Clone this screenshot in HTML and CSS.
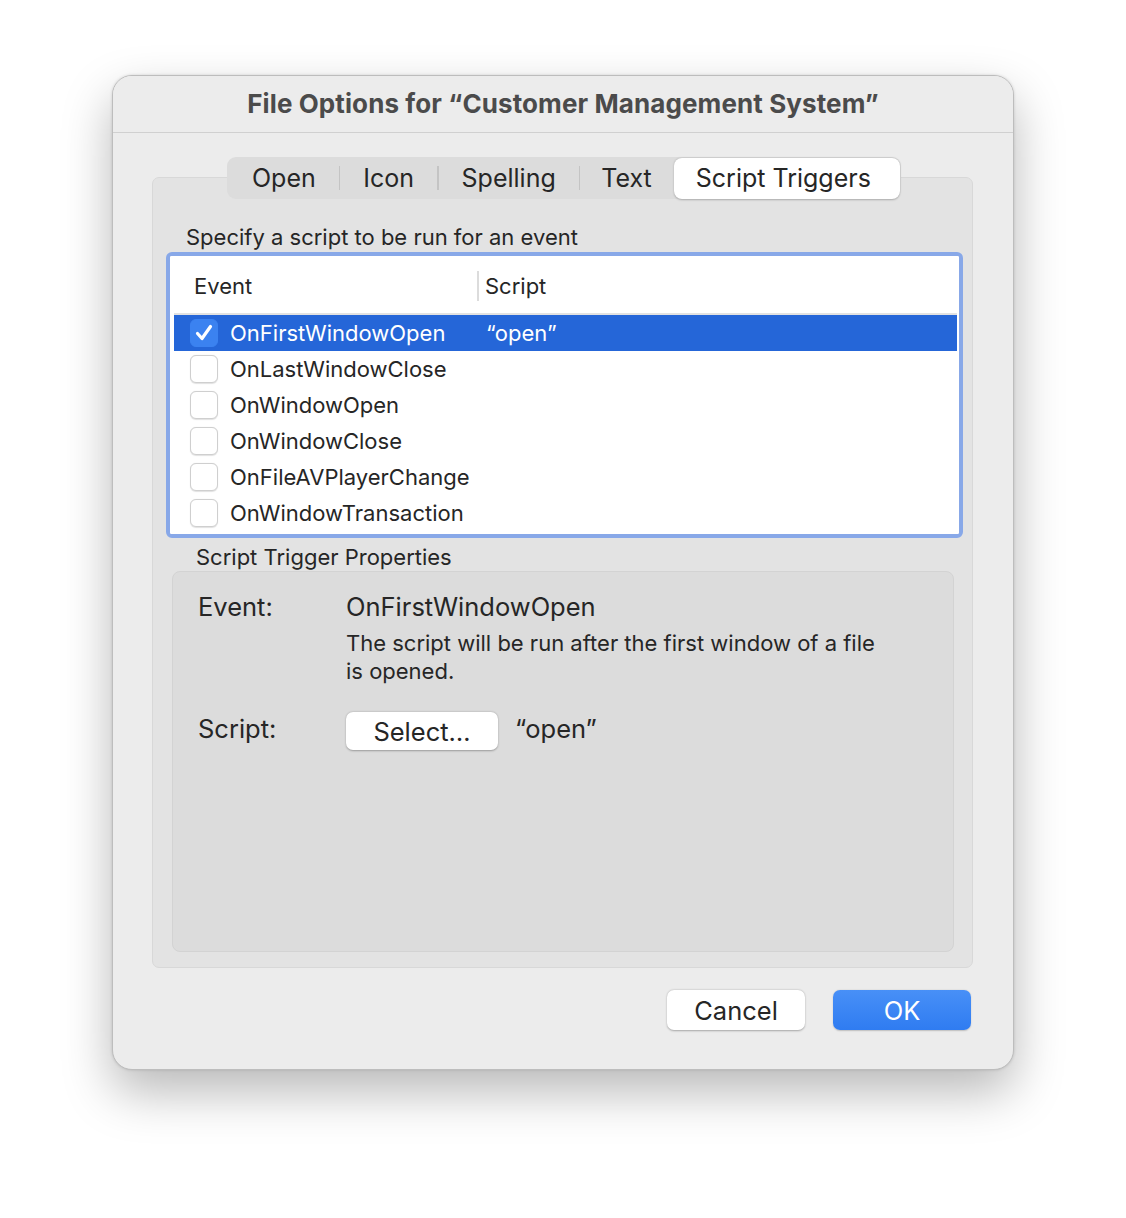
FILE: index.html
```html
<!DOCTYPE html>
<html>
<head>
<meta charset="utf-8">
<link rel="stylesheet" href="styles.css">
</head>
<body>
<div class="window">
  <div class="titlebar">File Options for “Customer Management System”</div>
  <div class="content">
    <div class="tabbox">
      <div class="segmented">
        <div class="seg">Open</div>
        <div class="sep"></div>
        <div class="seg">Icon</div>
        <div class="sep"></div>
        <div class="seg">Spelling</div>
        <div class="sep"></div>
        <div class="seg">Text</div>
        <div class="seg selected">Script Triggers</div>
      </div>
      <div class="tabbody">
        <div class="label specify">Specify a script to be run for an event</div>
        <div class="focusring">
          <div class="table">
            <div class="thead">
              <div class="th th-event">Event</div>
              <div class="th th-script">Script</div>
            </div>
            <div class="row sel">
              <span class="cb checked"><svg viewBox="0 0 28 28" width="28" height="28"><path d="M7.5 14.5 L12 19.5 L20.5 7.5" fill="none" stroke="#fff" stroke-width="3.2" stroke-linecap="round" stroke-linejoin="round"/></svg></span>
              <span class="ev">OnFirstWindowOpen</span>
              <span class="sc">“open”</span>
            </div>
            <div class="row"><span class="cb"></span><span class="ev">OnLastWindowClose</span></div>
            <div class="row"><span class="cb"></span><span class="ev">OnWindowOpen</span></div>
            <div class="row"><span class="cb"></span><span class="ev">OnWindowClose</span></div>
            <div class="row"><span class="cb"></span><span class="ev">OnFileAVPlayerChange</span></div>
            <div class="row"><span class="cb"></span><span class="ev">OnWindowTransaction</span></div>
          </div>
        </div>
        <div class="label props-title">Script Trigger Properties</div>
        <div class="props">
          <div class="prow">
            <div class="plabel">Event:</div>
            <div class="pval">
              <div class="evname">OnFirstWindowOpen</div>
              <div class="desc">The script will be run after the first window of a file is opened.</div>
            </div>
          </div>
          <div class="prow script-row">
            <div class="plabel">Script:</div>
            <div class="pval inline">
              <div class="btn select">Select…</div>
              <div class="scriptname">“open”</div>
            </div>
          </div>
        </div>
      </div>
    </div>
    <div class="actions">
      <div class="btn cancel">Cancel</div>
      <div class="btn ok">OK</div>
    </div>
  </div>
</div>
</body>
</html>
```
FILE: styles.css
```css
* { box-sizing: border-box; }
html, body { margin: 0; padding: 0; }
body {
  background: #ffffff;
  font-family: Inter, "Noto Sans", "Liberation Sans", sans-serif;
  color: #262626;
  padding: 75px 0 0 112px;
  height: 1218px;
  overflow: hidden;
}
.window {
  width: 902px;
  height: 995px;
  background: #ececec;
  border-radius: 20px;
  border: 1px solid #bdbdbd;
  box-shadow: 0 22px 50px rgba(0,0,0,0.28), 0 0 3px rgba(0,0,0,0.15);
  display: flex;
  flex-direction: column;
  overflow: hidden;
}
.titlebar {
  height: 57px;
  border-bottom: 1px solid #d0d0d0;
  display: flex;
  align-items: center;
  justify-content: center;
  font-weight: 700;
  font-size: 26px;
  letter-spacing: 0.1px;
  color: #4b4b4b;
  background: #ececec;
  padding-bottom: 2px;
}
.content {
  padding: 24px 40px 0 39px;
  display: flex;
  flex-direction: column;
}
.tabbox {
  position: relative;
  padding-top: 20px;
}
.segmented {
  position: absolute;
  top: 0;
  left: 75px;
  height: 42px;
  width: 674px;
  background: #dcdcdc;
  border-radius: 9px;
  display: flex;
  align-items: center;
  padding: 0 1px;
  z-index: 2;
}
.seg {
  font-size: 25px;
  color: #262626;
  padding: 0 23px;
  height: 40px;
  display: flex;
  align-items: center;
  white-space: nowrap;
}
.seg:first-child { padding-left: 24px; }
.seg:nth-child(7) { padding: 0 22px 0 21px; }
.sep { width: 1.5px; height: 24px; background: #c4c4c4; }
.seg.selected {
  background: #ffffff;
  border-radius: 8px;
  box-shadow: 0 0.5px 2px rgba(0,0,0,0.25);
  width: 227px;
  padding: 0 0 0 22px;
  height: 41px;
  margin-left: auto;
}
.tabbody {
  background: #e3e3e3;
  border: 1px solid #d8d8d8;
  border-radius: 7px;
  height: 791px;
  padding: 46px 9px 0 13px;
}
.label {
  font-size: 22px;
  color: #262626;
}
.specify { padding-left: 20px; height: 27px; line-height: 27px; }
.focusring {
  margin-top: 1px;
  border: 4px solid #88a8e8;
  border-radius: 6px;
  background: #88a8e8;
  width: 797px;
  height: 286px;
  overflow: hidden;
}
.table {
  background: #ffffff;
  height: 100%;
  border-style: solid;
  border-color: #ffffff;
  border-width: 3px 2px 2px 4px;
}
.thead {
  height: 56px;
  display: flex;
  align-items: center;
  border-bottom: 2px solid #e2e2e2;
}
.th { font-size: 22px; color: #262626; }
.th-event {
  width: 305px;
  padding-left: 20px;
  height: 30px;
  line-height: 30px;
  border-right: 2px solid #dcdcdc;
}
.th-script { padding-left: 6px; }
.row {
  height: 36px;
  display: flex;
  align-items: center;
  padding-left: 16px;
  font-size: 22px;
  color: #262626;
}
.row.sel { background: #2566d8; color: #ffffff; }
.cb {
  width: 28px;
  height: 28px;
  border-radius: 6px;
  background: #ffffff;
  border: 1px solid #cfcfcf;
  box-shadow: 0 0.5px 1px rgba(0,0,0,0.12);
  display: inline-block;
  flex: none;
}
.cb.checked {
  background: #3b82f0;
  border-color: #3b82f0;
  box-shadow: none;
}
.cb svg { display: block; margin: -1px; }
.ev { margin-left: 12px; width: 256px; }
.props-title { padding-left: 30px; margin-top: 5px; height: 28px; line-height: 28px; }
.props {
  margin-left: 6px;
  width: 782px;
  height: 381px;
  background: #dcdcdc;
  border: 1px solid #d3d3d3;
  border-radius: 8px;
  padding: 19px 0 0 25px;
}
.prow { display: flex; }
.plabel { width: 148px; font-size: 25.5px; color: #262626; line-height: 32px; }
.evname { font-size: 25.5px; line-height: 32px; color: #262626; }
.desc {
  font-size: 22px;
  line-height: 28px;
  width: 545px;
  margin-top: 6px;
}
.script-row { margin-top: 25px; align-items: center; height: 38px; }
.script-row .plabel { margin-top: 0; }
.inline { display: flex; align-items: center; }
.btn {
  display: flex;
  align-items: center;
  justify-content: center;
  font-size: 25.5px;
  border-radius: 7px;
}
.select {
  width: 152px;
  height: 38px;
  background: #ffffff;
  box-shadow: 0 0.5px 2px rgba(0,0,0,0.3);
  color: #262626;
  margin-top: 4px;
}
.scriptname { font-size: 25.5px; margin-left: 17px; margin-top: -2px; }
.actions {
  display: flex;
  justify-content: flex-end;
  gap: 28px;
  margin-top: 22px;
  padding-right: 2px;
}
.cancel {
  width: 138px;
  height: 40px;
  background: #ffffff;
  box-shadow: 0 0.5px 2px rgba(0,0,0,0.3);
  color: #262626;
}
.ok {
  width: 138px;
  height: 40px;
  background: linear-gradient(#4890f7, #2f7cf1);
  color: #ffffff;
  box-shadow: 0 0.5px 1.5px rgba(0,0,0,0.2);
}
```
